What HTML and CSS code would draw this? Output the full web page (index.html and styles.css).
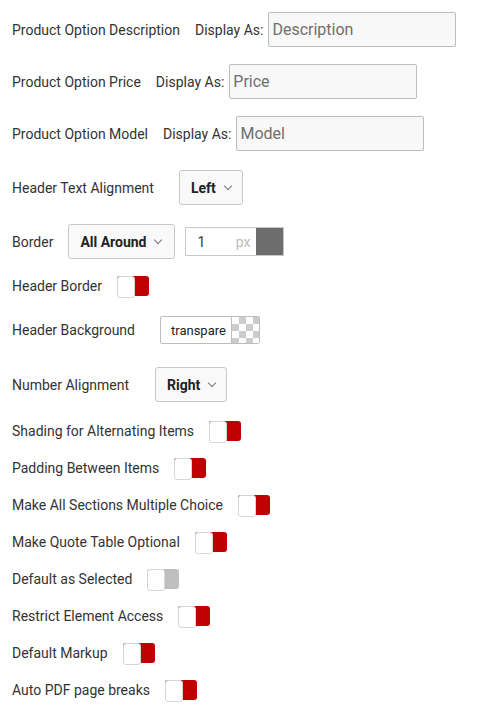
FILE: index.html
```html
<!DOCTYPE html>
<html lang="en">
<head>
	<meta charset="UTF-8">
	<title>Quote Table Settings</title>
	<link rel="stylesheet" href="styles.css">
</head>
<body>
	<div class="settings">
		<div class="row">
			<span class="label">Product Option Description</span>
			<span class="displayAs">Display As:</span>
			<input class="textField" type="text" value="Description">
		</div>
		<div class="row">
			<span class="label">Product Option Price</span>
			<span class="displayAs">Display As:</span>
			<input class="textField" type="text" value="Price">
		</div>
		<div class="row rowLoose">
			<span class="label">Product Option Model</span>
			<span class="displayAs">Display As:</span>
			<input class="textField" type="text" value="Model">
		</div>
		<div class="row rowLoose">
			<span class="label">Header Text Alignment</span>
			<div class="dropdown dropAlign">Left <span class="chevron"></span></div>
		</div>
		<div class="row">
			<span class="label">Border</span>
			<div class="dropdown dropBorder">All Around <span class="chevron"></span></div>
			<div class="sizeField">
				<span class="sizeValue">1</span>
				<span class="sizeUnit">px</span>
				<span class="swatch"></span>
			</div>
		</div>
		<div class="row rowToggle rowHeaderBorder">
			<span class="label">Header Border</span>
			<span class="toggle"></span>
		</div>
		<div class="row rowColor">
			<span class="label">Header Background</span>
			<div class="colorField">
				<span class="colorValue">transpare</span>
				<span class="checker"></span>
			</div>
		</div>
		<div class="row rowLoose">
			<span class="label">Number Alignment</span>
			<div class="dropdown dropNumber">Right <span class="chevron"></span></div>
		</div>
		<div class="row rowToggle">
			<span class="label">Shading for Alternating Items</span>
			<span class="toggle"></span>
		</div>
		<div class="row rowToggle">
			<span class="label">Padding Between Items</span>
			<span class="toggle"></span>
		</div>
		<div class="row rowToggle">
			<span class="label">Make All Sections Multiple Choice</span>
			<span class="toggle"></span>
		</div>
		<div class="row rowToggle">
			<span class="label">Make Quote Table Optional</span>
			<span class="toggle"></span>
		</div>
		<div class="row rowToggle">
			<span class="label">Default as Selected</span>
			<span class="toggle off"></span>
		</div>
		<div class="row rowToggle">
			<span class="label">Restrict Element Access</span>
			<span class="toggle"></span>
		</div>
		<div class="row rowToggle">
			<span class="label">Default Markup</span>
			<span class="toggle"></span>
		</div>
		<div class="row rowToggle">
			<span class="label">Auto PDF page breaks</span>
			<span class="toggle"></span>
		</div>
	</div>
</body>
</html>
```

FILE: styles.css
```css
* {
	margin: 0;
	padding: 0;
	box-sizing: border-box;
}

body {
	background-color: #fff;
	font-family: Roboto, "Liberation Sans", sans-serif;
	font-size: 14px;
	color: #333;
}

.settings {
	padding: 12px 12px 0 12px;
}

.row {
	display: flex;
	align-items: center;
	height: 35px;
	margin-bottom: 17px;
}

.rowLoose {
	margin-bottom: 19px;
}

.rowToggle {
	height: 20px;
	margin-bottom: 17px;
}

.rowHeaderBorder {
	margin-bottom: 20px;
}

.rowColor {
	height: 28px;
	margin-bottom: 23px;
}

.label {
	white-space: nowrap;
}

.displayAs {
	margin-left: 15px;
	margin-right: 5px;
	white-space: nowrap;
}

.textField {
	width: 188px;
	height: 35px;
	padding: 0 3px;
	border: 1px solid #bdbdbd;
	border-radius: 2px;
	background-color: #f8f8f8;
	font-family: Roboto, "Liberation Sans", sans-serif;
	font-size: 16px;
	color: #6f6f6f;
	outline: none;
}

.dropdown {
	display: flex;
	align-items: center;
	height: 35px;
	padding: 0 11px 0 11px;
	border: 1px solid #c8c8c8;
	border-radius: 3px;
	background-color: #f9f9f9;
	font-weight: bold;
	color: #222;
	white-space: nowrap;
}

.dropAlign {
	margin-left: 25px;
}

.dropBorder {
	margin-left: 15px;
	padding-right: 13px;
}

.dropNumber {
	margin-left: 26px;
}

.chevron {
	display: inline-block;
	width: 6px;
	height: 6px;
	margin-left: 9px;
	margin-top: -4px;
	border-right: 1px solid #777;
	border-bottom: 1px solid #777;
	transform: rotate(45deg);
}

.sizeField {
	display: flex;
	align-items: center;
	width: 99px;
	height: 29px;
	margin-left: 10px;
	border: 1px solid #c8c8c8;
}

.sizeValue {
	flex: 1;
	padding-left: 11px;
	color: #333;
}

.sizeUnit {
	color: #bbb;
	margin-right: 6px;
}

.swatch {
	width: 27px;
	height: 27px;
	background-color: #6d6d6d;
}

.colorField {
	display: flex;
	align-items: center;
	width: 100px;
	height: 28px;
	margin-left: 25px;
	border: 1px solid #bdbdbd;
	border-radius: 2px;
}

.colorValue {
	flex: 1;
	padding-left: 10px;
	font-size: 13px;
	color: #222;
}

.checker {
	width: 28px;
	height: 26px;
	border-left: 1px solid #bdbdbd;
	background-color: #fff;
	background-image:
		linear-gradient(45deg, #ccc 25%, transparent 25%, transparent 75%, #ccc 75%),
		linear-gradient(45deg, #ccc 25%, transparent 25%, transparent 75%, #ccc 75%);
	background-size: 14px 14px;
	background-position: 0 0, 7px 7px;
}

.toggle {
	position: relative;
	display: inline-block;
	width: 32px;
	height: 20px;
	margin-left: 15px;
	border-radius: 3px;
	background-color: #c00000;
}

.toggle::before {
	content: "";
	position: absolute;
	left: 0;
	top: 0;
	width: 16px;
	height: 20px;
	border: 1px solid #d6d6d6;
	border-radius: 3px;
	background-color: #fff;
}

.toggle.off {
	background-color: #bfbfbf;
}
```
